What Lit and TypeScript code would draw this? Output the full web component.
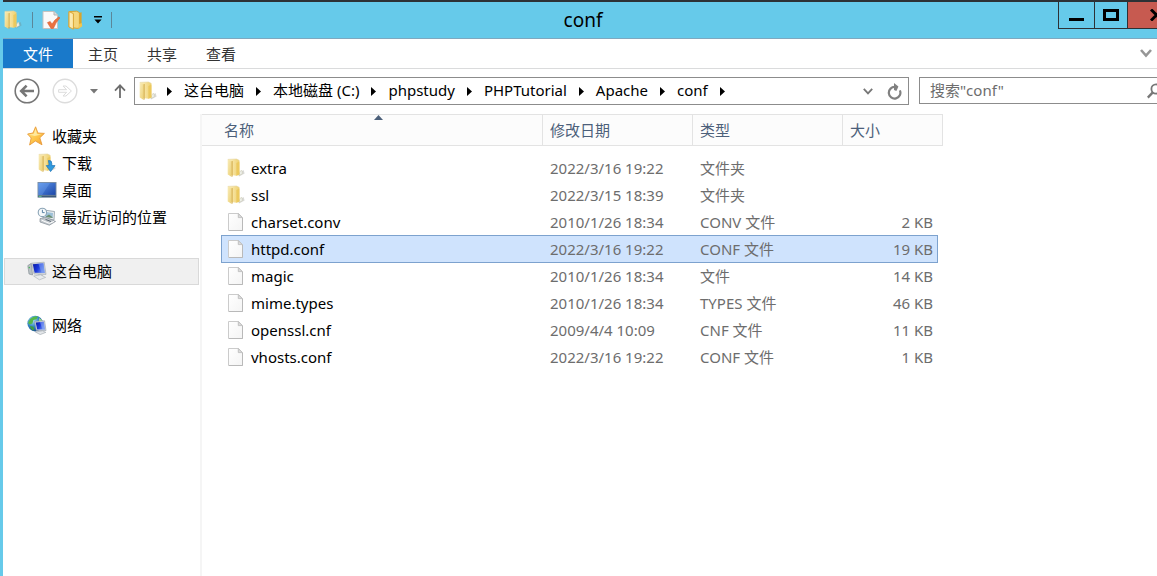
import { LitElement, html, css, svg, nothing } from "lit";
import { customElement, property, state } from "lit/decorators.js";

type IconName =
  | "folder" | "download" | "desktop" | "recent" | "star" | "computer"
  | "network" | "file" | "check" | "newfolder";

const folderShape = svg`
  <path d="M12 16 L17.6 12 L18.6 15.6 L13 18.6 Z" fill="#77776c" opacity=".28"/>
  <path d="M13.6 14.6 Q14.6 12 15.8 12.4 L16.4 15.6 L13 17.6 Z" fill="#eef0ea" stroke="#c9c7ae" stroke-width=".5"/>
  <path d="M1.8 1.4 L10.6 1 L13.4 2.4 V16.6 L10.4 17.8 L1.8 16.6 Z" fill="url(#fb)"/>
  <path d="M10.4 5 L13.4 3.4 V16.6 L10.4 17.8 Z" fill="#ecc95e"/>
  <path d="M1.8 1.4 L5.4 3.2 V18.8 L1.8 16.6 Z" fill="url(#ff)"/>
  <path d="M5.4 3.2 L6.8 3 V18.4 L5.4 18.8 Z" fill="#d3ad4c" opacity=".8"/>
  <path d="M1.8 1.4 L10.6 1 L13.4 2.4" fill="none" stroke="#e3d3a0" stroke-width=".6"/>`;

const shapes: Record<IconName, unknown> = {
  folder: folderShape,
  newfolder: svg`
    <path d="M11 3 L13.6 2.2 V16 L11 18 Z" fill="#dba52a"/>
    <path d="M1 1.6 L8.6 1.2 L11.4 2.6 V18 L9 18.4 L1 17 Z" fill="#f4d67c" stroke="#d9a534"/>
    <path d="M1 1.6 L5.4 3.6 V19.2 L1 17 Z" fill="#fbeab0" stroke="#d9a534"/>
    <path d="M11 14 L13.8 13 L14.2 16.2 L10.6 18.8 Z" fill="#f0c650"/>`,
  download: svg`${folderShape}
    <path d="M11.4 7.5 Q15 7 14.8 10.5 V12.6 H18 L13.6 18.6 L9.2 12.6 H11.9 V10.5 Z"
      fill="#2f9ae0" stroke="#1c74b8" stroke-width=".7"/>`,
  desktop: svg`
    <rect x=".5" y="2" width="19" height="15.6" fill="#7d8fa3"/>
    <rect x="1.4" y="2.9" width="17.2" height="12" fill="url(#scr)"/>
    <path d="M1.4 2.9 H13 L5 14.9 H1.4 Z" fill="#7fb0f5" opacity=".3"/>
    <rect x="1" y="15.6" width="18" height="1.6" fill="#3e5a78"/>
    <rect x="1.6" y="15.9" width="3" height="1" fill="#5cc08a"/>`,
  recent: svg`
    <path d="M7 3 L17.5 4.5 L17 13 L6 11 Z" fill="#e6ebee" stroke="#8d9aa5" stroke-width=".8"/>
    <path d="M8.8 5 L16 6 L15.6 11 L8.2 9.8 Z" fill="#9dc0d8"/>
    <path d="M9 9.6 L12 7.4 L15.6 10.2 L15.5 11 L8.6 10 Z" fill="#6c8f70"/>
    <path d="M3 11.6 L9 10.4 L18.6 14.4 L12.4 18.2 L3 15 Z" fill="#c3c9ce" stroke="#848e97" stroke-width=".7"/>
    <path d="M4.6 13.2 L12.4 16.4 L17 14.4" fill="none" stroke="#fff" stroke-width="1"/>
    <path d="M8.5 12.4 L14 14.5" stroke="#5d6974" stroke-width="1"/>
    <circle cx="5.4" cy="5.4" r="4.2" fill="#f5f9fb" stroke="#8aa3b5" stroke-width="1.1"/>
    <path d="M5.4 2.8 V5.6 H7.6" fill="none" stroke="#48769c" stroke-width=".9"/>`,
  star: svg`
    <path d="M8.6 .8 L10.9 7 L17.4 7.4 L12.8 11.8 L15 18.8 L8.4 15 L2.6 19 L4.2 12 L.6 8 L6 7 Z"
      fill="url(#st)" stroke="#e89a3a" stroke-width=".9" stroke-linejoin="round"/>
    <path d="M8.6 3 L10 8 L14.6 8.4 L7.6 10 L2.1 8.4 L6.8 8 Z" fill="#fff3b8" opacity=".75"/>`,
  computer: svg`
    <path d="M.8 4.6 L4.2 2.4 L5.6 14 L2 13 Z" fill="#b9c0c4" stroke="#7f898f" stroke-width=".6"/>
    <circle cx="2.3" cy="6.6" r=".8" fill="#4db45a"/>
    <path d="M4.6 2.2 L17.2 1.2 L19 13.4 L7 13 Z" fill="#d5d9de" stroke="#9aa2aa" stroke-width=".6"/>
    <path d="M5.8 3.2 L16.4 2.2 L17.8 12 L7.6 11.8 Z" fill="url(#mon)"/>
    <path d="M11.4 2.7 L16.4 2.2 L17.8 12 L14.6 11.9 Z" fill="#7fa0f2" opacity=".55"/>
    <path d="M11 13 L15 13.2 L16.6 15.6 L11.6 16 Z" fill="#bcc2c8"/>
    <path d="M6.6 15 L13.6 13.8 L18.6 16.4 L12.4 18.8 Z" fill="#e7eaec" stroke="#a5acb2" stroke-width=".6"/>`,
  network: svg`
    <circle cx="8.2" cy="8.6" r="7.8" fill="url(#gl)"/>
    <path d="M3 4 Q7 .6 11 1.6 L9.4 4.2 L6.4 5 L5.4 8.4 L2.6 9.4 L1 8 Z" fill="#55b949"/>
    <path d="M3 11 L6.6 11.8 L7 15.6 Q3.6 14.6 3 11 Z" fill="#3f9f3e"/>
    <path d="M12 3 L15 5 L14.4 6.4 L12 6 Z" fill="#a5dd80"/>
    <path d="M7.6 6.4 L17.6 5.8 L19 15.6 L9.4 15.6 Z" fill="#d9dde2" stroke="#8f99a6" stroke-width=".6"/>
    <path d="M8.7 7.4 L16.8 6.8 L18 14.6 L10.2 14.5 Z" fill="url(#mon)"/>
    <path d="M13 7.1 L16.8 6.8 L18 14.6 L15.4 14.5 Z" fill="#8eacf4" opacity=".55"/>
    <path d="M8.4 17 L15.6 15.8 L18.8 17.4 L13.2 19.6 Z" fill="#e3e6e9" stroke="#9ba3aa" stroke-width=".6"/>`,
  file: svg`
    <path d="M2.5 1.5 H12.5 L16.5 5.5 V18.5 H2.5 Z" fill="url(#pg)" stroke="#cbcbcb"/>
    <path d="M16.5 6 V18.5 H3" fill="none" stroke="#b9b9b9"/>
    <path d="M12.3 1.7 V5.6 H16.4 Z" fill="#dedede" stroke="#b9b9b9" stroke-width=".8"/>`,
  check: svg`
    <path d="M1 1.5 H12 L15.5 5 V18.5 H1 Z" fill="#fafafa" stroke="#c7c3c0"/>
    <path d="M12 1.5 V5 H15.5" fill="#ddd" stroke="#b7b3b0"/>
    <path d="M5.4 12.6 L8.2 11.4 L10 14 Q12.4 9.6 17 6.8 L17.8 8 Q14 12 11.4 18.4 H9 Z" fill="#ea7240" stroke="#d4562c" stroke-width=".5"/>`,
};

@customElement("fe-icon")
class FeIcon extends LitElement {
  @property() name: IconName = "file";
  static styles = css`
    :host { display: block; flex: none; width: 20px; height: 20px; }
    svg { display: block; width: 100%; height: 100%; }
  `;
  render() {
    return html`<svg viewBox="0 0 20 20" aria-hidden="true">
      <defs>
        <linearGradient id="fb"><stop offset="0" stop-color="#fbeeb8"/><stop offset=".5" stop-color="#f6e19a"/><stop offset="1" stop-color="#edd070"/></linearGradient>
        <linearGradient id="ff" x2="1" y2="1"><stop offset="0" stop-color="#f9ecba"/><stop offset="1" stop-color="#ecd073"/></linearGradient>
        <linearGradient id="scr" x2="1" y2="1"><stop offset="0" stop-color="#5d95ea"/><stop offset="1" stop-color="#1c47a8"/></linearGradient>
        <linearGradient id="mon" x2="1" y2=".4"><stop offset="0" stop-color="#0717a0"/><stop offset=".55" stop-color="#1b38dc"/><stop offset="1" stop-color="#6f93f0"/></linearGradient>
        <linearGradient id="st" x2="1" y2="1"><stop offset="0" stop-color="#ffe98a"/><stop offset=".6" stop-color="#fdc144"/><stop offset="1" stop-color="#f09a35"/></linearGradient>
        <linearGradient id="pg" x2="1" y2="1"><stop offset="0" stop-color="#fff"/><stop offset="1" stop-color="#f4f4f4"/></linearGradient>
        <radialGradient id="gl" cx=".35" cy=".3" r=".8"><stop offset="0" stop-color="#a9dcf2"/><stop offset=".5" stop-color="#3285c4"/><stop offset="1" stop-color="#123f80"/></radialGradient>
      </defs>
      ${shapes[this.name]}
    </svg>`;
  }
}

interface Entry { name: string; date: string; type: string; size: string; }

const entries: Entry[] = [
  { name: "extra", date: "2022/3/16 19:22", type: "文件夹", size: "" },
  { name: "ssl", date: "2022/3/15 18:39", type: "文件夹", size: "" },
  { name: "charset.conv", date: "2010/1/26 18:34", type: "CONV 文件", size: "2 KB" },
  { name: "httpd.conf", date: "2022/3/16 19:22", type: "CONF 文件", size: "19 KB" },
  { name: "magic", date: "2010/1/26 18:34", type: "文件", size: "14 KB" },
  { name: "mime.types", date: "2010/1/26 18:34", type: "TYPES 文件", size: "46 KB" },
  { name: "openssl.cnf", date: "2009/4/4 10:09", type: "CNF 文件", size: "11 KB" },
  { name: "vhosts.conf", date: "2022/3/16 19:22", type: "CONF 文件", size: "1 KB" },
];

const crumbs = ["这台电脑", "本地磁盘 (C:)", "phpstudy", "PHPTutorial", "Apache", "conf"];

const places: { label: string; icon: IconName; child?: boolean }[][] = [
  [
    { label: "收藏夹", icon: "star" },
    { label: "下载", icon: "download", child: true },
    { label: "桌面", icon: "desktop", child: true },
    { label: "最近访问的位置", icon: "recent", child: true },
  ],
  [{ label: "这台电脑", icon: "computer" }],
  [{ label: "网络", icon: "network" }],
];

@customElement("app-root")
class AppRoot extends LitElement {
  @state() private selected = "httpd.conf";
  @state() private place = "这台电脑";

  static styles = css`
    :host {
      display: block;
      height: 100vh;
      overflow: hidden;
      background: #fff;
      color: #000;
      font: 15px/20px "Noto Sans", "Noto Sans CJK SC", sans-serif;
    }
    *, *::before { box-sizing: border-box; }
    button, input { font: inherit; color: inherit; }
    button { margin: 0; padding: 0; border: 0; background: none; display: flex; align-items: center; }
    svg { display: block; flex: none; }

    .window {
      display: flex;
      flex-direction: column;
      width: calc(100% + 27px);
      height: 100%;
      border-left: 3px solid #66caea;
    }

    .titlebar {
      display: flex;
      height: 39px;
      border-top: 2px solid #2d3135;
      border-bottom: 1px solid #7fa8bf;
      background: #66caea;
    }
    .quick { display: flex; align-items: center; gap: 9px; }
    .quick .tools { display: flex; align-items: center; gap: 6px; }
    .rule { width: 1px; height: 16px; background: #5b8799; }
    .title { flex: 1; margin: 0; padding-right: 4px; text-align: center; font-size: 19px; line-height: 36px; font-weight: 400; }
    .caption { display: flex; align-items: flex-start; }
    .caption button { width: 36px; height: 27px; justify-content: center; border: 1px solid #2d3135; border-top: 0; border-right: 0; }
    .caption .max { width: 33px; }
    .caption .close { width: 57px; background: #c75a50; }

    .tabs { display: flex; height: 30px; gap: 1px; border-bottom: 1px solid #dadbdc; color: #333; }
    .tabs button { padding: 0 14px; }
    .tabs .file { width: 70px; justify-content: center; background: #1979ca; color: #fff; }
    .tabs .fold { margin-left: auto; padding: 0 32px; }

    .nav { display: flex; align-items: flex-start; padding: 8px 0 9px 11px; }
    .nav .history { display: flex; align-items: center; height: 28px; }
    .history .forward { margin-left: 12px; }
    .history .recent { margin-left: 12px; }
    .history .up { margin: 0 8px 0 16px; }
    .address { display: flex; align-items: center; flex: 1; min-width: 0; height: 28px; padding: 0 6px 0 3px; border: 1px solid #8c8c8c; }
    .crumbs { display: flex; align-items: center; gap: 12px; flex: 1; min-width: 0; margin: 0 0 0 9px; padding: 0; list-style: none; white-space: nowrap; }
    .crumbs li { display: flex; align-items: center; gap: 12px; }
    .crumbs button { padding-bottom: 2px; }
    .address .refresh { margin-left: 14px; }
    .search { display: flex; align-items: center; width: 265px; height: 27px; margin-left: 10px; padding: 0 16px 0 10px; border: 1px solid #8c8c8c; }
    .search input { flex: 1; min-width: 0; padding: 0 0 2px; border: 0; outline: 0; background: none; }
    .search input::placeholder { color: #6d6d6d; opacity: 1; }

    .body { display: flex; flex: 1; min-height: 0; }
    .places { width: 199px; flex: none; padding: 9px 1px 0 1px; border-right: 2px solid #f5f5f5; }
    .places ul { margin: 0 0 27px; padding: 0; list-style: none; }
    .places button { width: 100%; height: 27px; gap: 5px; padding: 0 0 2px 22px; border: 1px solid transparent; text-align: left; }
    .places .child { padding-left: 32px; }
    .places .current { background: #f0f0f0; border-color: #d9d9d9; }

    table, thead { display: block; }
    table { border-spacing: 0; }
    tr { display: grid; }
    thead tr { grid-template-columns: 341px 150px 150px 100px; }
    th {
      height: 32px;
      padding: 0 7px;
      border: 1px solid #e3e3e3;
      border-left: 0;
      background: #fcfcfc;
      color: #4c607a;
      font-weight: 400;
      line-height: 30px;
      text-align: left;
    }
    th.byname { display: grid; grid-template-columns: 1fr 9px 1fr; padding-left: 22px; padding-right: 0; }
    th.byname svg { margin: 0 0 0 -5px; }
    tbody { display: block; margin: 8px 5px 0 19px; }
    tbody tr { grid-template-columns: 321px 150px 150px 94px; height: 28px; margin-bottom: -1px; border: 1px solid transparent; }
    tbody tr.selected { background: #cfe3fd; border-color: #7da2ce; }
    td { padding: 0 4px 0 7px; color: #6d6d6d; line-height: 26px; white-space: nowrap; }
    td.name { display: flex; align-items: center; gap: 5px; padding-left: 4px; color: #000; }
    td.size { text-align: right; }
  `;

  private arrow() {
    return html`<svg width="5" height="9" viewBox="0 0 5 9" aria-hidden="true"><path d="M0 0 L5 4.5 L0 9 Z" fill="#000"/></svg>`;
  }

  render() {
    return html`
      <div class="window">
        <header class="titlebar">
          <div class="quick">
            <fe-icon name="folder"></fe-icon>
            <span class="rule"></span>
            <span class="tools">
              <button aria-label="属性"><fe-icon name="check"></fe-icon></button>
              <button aria-label="新建文件夹"><fe-icon name="newfolder"></fe-icon></button>
              <button aria-label="自定义快速访问工具栏">
                <svg width="8" height="8" viewBox="0 0 8 8"><path d="M0 0 H8 V1.4 H0 Z M0.4 3.6 H7.6 L4 7.6 Z" fill="#000"/></svg>
              </button>
            </span>
            <span class="rule"></span>
          </div>
          <h1 class="title">conf</h1>
          <div class="caption">
            <button aria-label="最小化"><svg width="15" height="15"><path d="M0 10 H15 V13 H0 Z"/></svg></button>
            <button class="max" aria-label="最大化"><svg width="16" height="12"><path d="M1.5 1.5 H14.5 V10.5 H1.5 Z" fill="none" stroke="#000" stroke-width="3"/></svg></button>
            <button class="close" aria-label="关闭"><svg width="13" height="12"><path d="M1 0.5 L12 11.5 M12 0.5 L1 11.5" stroke="#000" stroke-width="3"/></svg></button>
          </div>
        </header>

        <nav class="tabs">
          <button class="file">文件</button>
          <button>主页</button>
          <button>共享</button>
          <button>查看</button>
          <button class="fold" aria-label="展开功能区">
            <svg width="12" height="9" viewBox="0 0 12 9"><path d="M1 1 L6 6.5 L11 1" fill="none" stroke="#969696" stroke-width="2.6"/></svg>
          </button>
        </nav>

        <div class="nav">
          <div class="history">
            <button aria-label="后退">
              <svg width="26" height="26" viewBox="0 0 26 26" fill="none" stroke="#767676">
                <circle cx="13" cy="13" r="11.8" stroke-width="1.6"/>
                <path d="M20 13 H8 M12.6 7.6 L7.2 13 L12.6 18.4" stroke-width="2.6"/>
              </svg>
            </button>
            <button class="forward" aria-label="前进">
              <svg width="26" height="26" viewBox="0 0 26 26" fill="none" stroke="#dcdcdc">
                <circle cx="13" cy="13" r="11.8" stroke-width="1.4"/>
                <path d="M6.6 11.7 H14.6 L11 8 H14 L19.4 13 L14 18 H11 L14.6 14.3 H6.6 Z" stroke-width="1"/>
              </svg>
            </button>
            <button class="recent" aria-label="最近浏览的位置">
              <svg width="8" height="5" viewBox="0 0 8 5"><path d="M0 0 H8 L4 4.6 Z" fill="#777"/></svg>
            </button>
            <button class="up" aria-label="上移">
              <svg width="12" height="14" viewBox="0 0 12 14" fill="none" stroke="#6d6d6d" stroke-width="1.8"><path d="M6 14 V1.5 M1 6.6 L6 1.4 L11 6.6"/></svg>
            </button>
          </div>
          <div class="address">
            <fe-icon name="folder"></fe-icon>
            <ul class="crumbs">
              <li>${this.arrow()}</li>
              ${crumbs.map((c) => html`<li><button>${c}</button>${this.arrow()}</li>`)}
            </ul>
            <button aria-label="以前的位置">
              <svg width="10" height="7" viewBox="0 0 10 7"><path d="M.8 .8 L5 5.4 L9.2 .8" fill="none" stroke="#777" stroke-width="1.8"/></svg>
            </button>
            <button class="refresh" aria-label="刷新">
              <svg width="15" height="17" viewBox="0 0 15 17"><path d="M12.9 7.4 A5.8 5.8 0 1 1 8.2 4" fill="none" stroke="#808080" stroke-width="2.2"/><path d="M7 0 L11.4 3.4 L9.4 8 L7 7 Z" fill="#808080"/></svg>
            </button>
          </div>
          <label class="search">
            <input type="search" placeholder='搜索"conf"' aria-label="搜索" />
            <svg width="20" height="16" viewBox="0 0 20 16" fill="none" stroke="#777" stroke-width="1.8"><circle cx="9" cy="6" r="4.6"/><path d="M5.8 9.4 L.8 14.6" stroke-width="2.4"/></svg>
          </label>
        </div>

        <div class="body">
          <nav class="places">
            ${places.map((group) => html`<ul>
              ${group.map((p) => html`<li>
                <button class="${p.child ? "child" : ""} ${p.label === this.place ? "current" : ""}"
                  @click=${() => (this.place = p.label)}>
                  <fe-icon name=${p.icon}></fe-icon>${p.label}
                </button>
              </li>`)}
            </ul>`)}
          </nav>
          <main>
            <table>
              <thead>
                <tr>
                  <th class="byname" aria-sort="ascending">名称
                    <svg width="9" height="5" viewBox="0 0 9 5"><path d="M4.5 0 L9 5 H0 Z" fill="#4c607a"/></svg>
                  </th>
                  <th>修改日期</th>
                  <th>类型</th>
                  <th>大小</th>
                </tr>
              </thead>
              <tbody>
                ${entries.map((e) => html`
                  <tr class=${e.name === this.selected ? "selected" : nothing} @click=${() => (this.selected = e.name)}>
                    <td class="name"><fe-icon name=${e.type === "文件夹" ? "folder" : "file"}></fe-icon>${e.name}</td>
                    <td>${e.date}</td>
                    <td>${e.type}</td>
                    <td class="size">${e.size}</td>
                  </tr>`)}
              </tbody>
            </table>
          </main>
        </div>
      </div>
    `;
  }
}
